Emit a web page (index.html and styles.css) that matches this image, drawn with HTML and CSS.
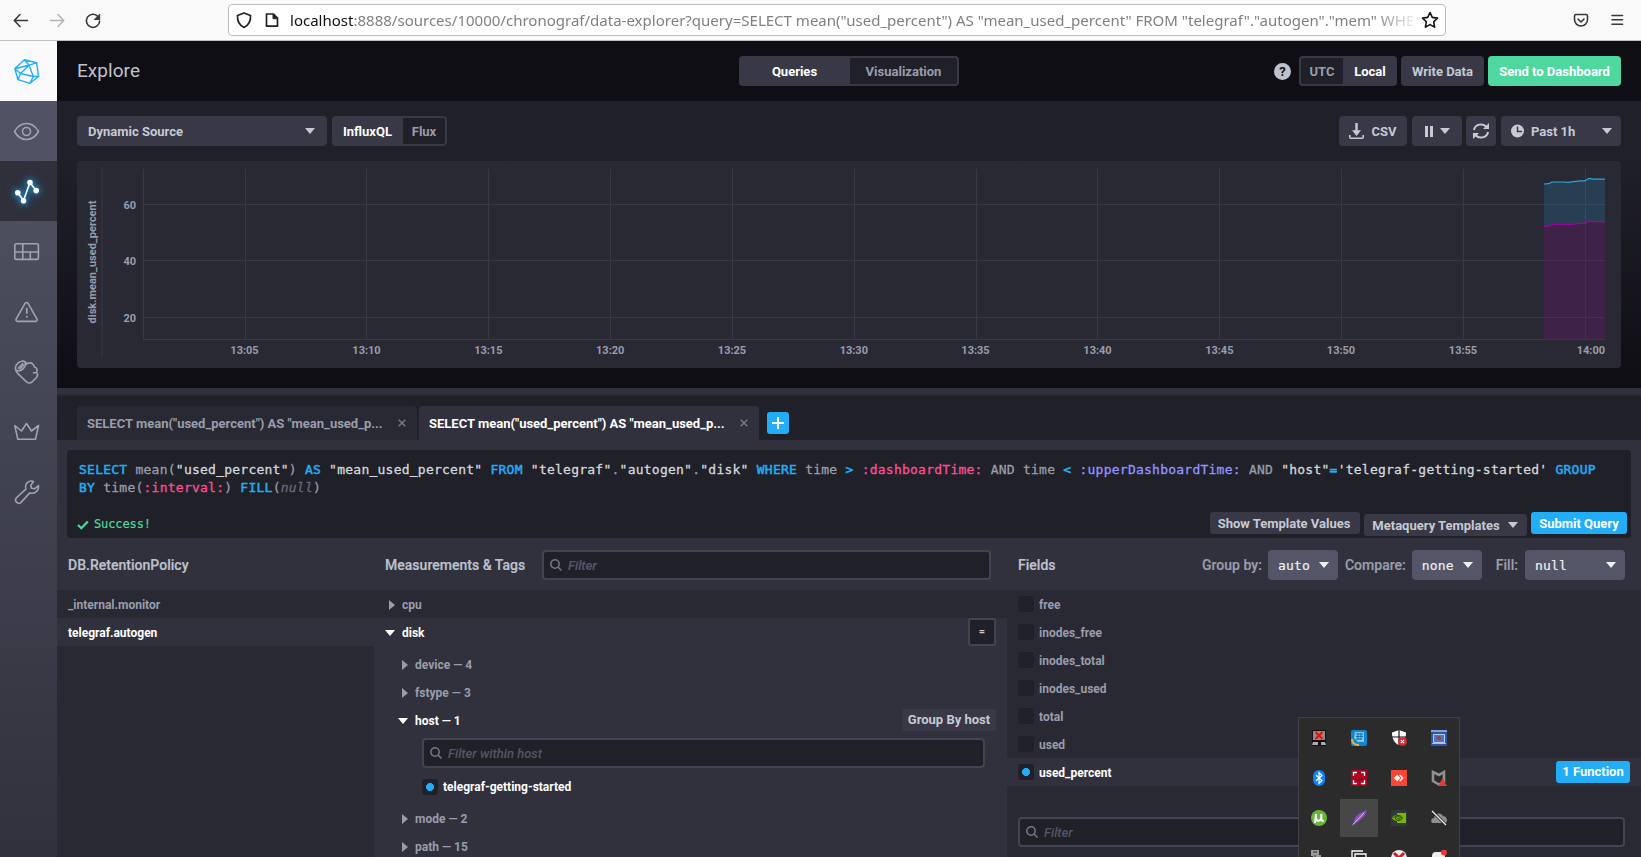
FILE: index.html
```html
<!DOCTYPE html>
<html lang="en">
<head>
<meta charset="utf-8">
<title>Explore</title>
<link rel="stylesheet" href="styles.css">
</head>
<body>
<div class="browser">
  <svg class="nav-icons" viewBox="0 0 228 40" fill="none" stroke="#38383d" stroke-width="1.6" stroke-linecap="round" stroke-linejoin="round">
    <path d="M27.5 20.5H14.5M20 14.5l-5.700 6 5.700 6"/>
    <path stroke="#b4b4b6" d="M50.500 20.500h13M58 14.500l5.700 6-5.700 6"/>
    <path d="M98 16.500A6.600 6.600 0 1 0 99.600 21"/>
    <path fill="#38383d" stroke-width="1" d="M99.700 14.500v5h-5z"/>
  </svg>
  <div class="url">
    <svg class="url-icons" viewBox="229 5 58 30" fill="none" stroke="#222" stroke-width="1.700" stroke-linejoin="round">
      <path d="M244 13l6.500 2.500c.3 5-1.500 9.500-6.500 12-5-2.500-6.800-7-6.500-12z"/>
      <path d="M266.500 14h7l4 4v8.200h-11z"/><path fill="#222" stroke-width="1" d="M273 14v4.700h4.700z"/>
    </svg>
    <div class="url-text"><b>localhost</b>:8888/sources/10000/chronograf/data-explorer?query=SELECT mean("used_percent") AS "mean_used_percent" FROM "telegraf"."autogen"."mem" WHE</div>
    <svg class="star" viewBox="0 0 20 20" fill="none" stroke="#111" stroke-width="1.600" stroke-linejoin="round"><path d="M10 2.500l2.300 4.900 5.200.7-3.800 3.700.9 5.300L10 14.600l-4.600 2.500.9-5.300-3.800-3.700 5.200-.7z"/></svg>
  </div>
  <svg class="menu-icons" viewBox="1560 0 81 40" fill="none" stroke="#38383d" stroke-width="1.600" stroke-linecap="round" stroke-linejoin="round">
    <path d="M1576 14.500h10a1.500 1.500 0 0 1 1.500 1.500v3.500a6.500 6.500 0 0 1-13 0V16a1.500 1.500 0 0 1 1.500-1.500zM1578 19l3 3 3-3"/>
    <path d="M1612 15.500h10.500M1612 19.800h10.500M1612 24.200h10.500"/>
  </svg>
</div>
<div class="app">
  <nav class="sidebar">
    <a class="item logo"><svg viewBox="0 41 57 60" stroke="#22adf6"><path d="M24.400 59.700l12.100 3 2.100 13.600-8.600 7L18 79.700l-3.200-11zM24.400 59.700l4.600 5.600 7.500-2.600M29 65.300l-8.500 8.200-5.700-4.800M20.500 73.500L18 79.700M29 65.300l4.300 11.200-12.800-3M33.300 76.500l5.300-.2M33.300 76.500L30 83.300M29 65.300L14.800 68.700"/></svg></a>
    <a class="item light"><svg viewBox="0 101 57 60"><path d="M14.500 131.500c3-5.300 7.200-8 12-8s9 2.700 12 8c-3 5.300-7.200 8-12 8s-9-2.700-12-8z"/><circle cx="26.500" cy="131.500" r="4"/></svg></a>
    <a class="item active"><svg viewBox="0 161 57 60"><g stroke="#fff" fill="#fff"><path fill="none" d="M18 193l5.500 7.500 6.500-18 6 8"/><circle cx="17.800" cy="192.700" r="2"/><circle cx="23.500" cy="200.700" r="2"/><circle cx="30" cy="182.500" r="2"/><circle cx="36.200" cy="190.600" r="2"/></g></svg></a>
    <a class="item"><svg viewBox="0 221 57 60"><rect x="14.800" y="243.800" width="23.600" height="15.600" rx="1.500"/><path d="M14.800 252h23.600M22.800 243.800v15.600M30.300 252v7.400"/></svg></a>
    <a class="item"><svg viewBox="0 281 57 60"><path d="M25.200 303.200a1.600 1.600 0 0 1 2.700 0l9.100 16a1.500 1.500 0 0 1-1.300 2.200H17.400a1.500 1.500 0 0 1-1.300-2.200z"/><path stroke-width="1.800" d="M26.800 308.500v4.500M26.800 316.500v.3"/></svg></a>
    <a class="item"><svg viewBox="0 341 57 60"><ellipse cx="20.500" cy="366" rx="6" ry="3.800" transform="rotate(-42 20.500 366)"/><path d="M15.900 370.300c0 1.500 1 2.200 2 3.300l8.600 8.200c2 1.500 4 1.500 5.700 0l3.600-3.600c2-2 2.500-4.200.7-5.700 1.300-2.500.5-5-2.200-5.500-.3-3-3-4.700-5.500-4l-3.800 1.500M25 361.800l2.300 2M18.300 368.200l4.300-4.500M20 369l3.500-3.800M36.500 372.500l-3 .3"/></svg></a>
    <a class="item"><svg viewBox="0 401 57 60"><path d="M17.800 439.300L14.800 425.500l6.700 5.500 5-7.500 5 7.500 7-5.500-3 13.800z"/></svg></a>
    <a class="item"><svg viewBox="0 461 57 60"><path d="M33.500 481.500c-3-1.200-6 .1-7.400 2.700-.8 1.700-.7 3.400-.2 5L16.200 498a3.300 3.300 0 0 0 4.600 4.600l9-9.700c4.500 1.500 9.200-1.700 8.700-7.400l-4 3.300-3-.6-.7-3z"/></svg></a>
  </nav>
  <main class="main">
    <header class="header">
      <h1 class="title">Explore</h1>
      <div class="radio page-tabs"><span class="on">Queries</span><span>Visualization</span></div>
      <div class="actions">
        <span class="help">?</span>
        <div class="radio tz"><span>UTC</span><span class="on">Local</span></div>
        <button class="btn write">Write Data</button>
        <button class="btn send">Send to Dashboard</button>
      </div>
    </header>
    <section class="viz">
      <div class="controls">
        <div class="btn source"><span>Dynamic Source</span><i class="caret"></i></div>
        <div class="radio lang"><span class="on">InfluxQL</span><span>Flux</span></div>
        <div class="btn csv"><svg width="15" height="18" viewBox="0 0 15 18" fill="none" stroke="#c6cad3" stroke-width="1.600"><path d="M.8 13v2.200q0 1 1 1h11.400q1 0 1-1V13"/><path stroke-width="2.400" d="M7.500 1v8"/><path fill="#c6cad3" stroke="none" d="M3 8.300h9L7.500 14z"/></svg><span>CSV</span></div>
        <div class="btn pause"><i class="bars"></i><i class="caret"></i></div>
        <div class="btn refresh"><svg width="18" height="18" viewBox="0 0 18 18" fill="none" stroke="#c6cad3" stroke-width="2"><path d="M2 8a7 6.500 0 0 1 12.500-3M16 10a7 6.500 0 0 1-12.500 3"/><path fill="#c6cad3" stroke="none" d="M17 1v6h-6zM1 17v-6h6z"/></svg></div>
        <div class="btn range"><svg width="13" height="14" viewBox="0 0 13 14"><circle cx="6.500" cy="7" r="6.500" fill="#c6cad3"/><path d="M6.500 2.500V7.500H11" fill="none" stroke="#383846" stroke-width="1.500"/></svg><span>Past 1h</span><i class="caret"></i></div>
      </div>
      <div class="graph">
        <svg viewBox="77 161 1544 207">
          <path d="M102 167v191" stroke="#31313d" stroke-width="2"/>
          <path class="grid" d="M245.500 169v170M366.500 169v170M488.500 169v170M610.500 169v170M732.500 169v170M854.500 169v170M976.500 169v170M1097.500 169v170M1219.500 169v170M1341.500 169v170M1463.500 169v170M1585.500 169v170M144 204.500h1461M144 260.500h1461M144 317.500h1461"/>
          <path class="grid" d="M143.500 169v170.500H1605"/>
          <path fill="#22adf6" fill-opacity=".17" d="M1544 184l5-.3 3-1.700h12l4 .3 12-1.500h5l4-2.800 4 1h12v43h-12l-4-1-4 2.800h-5l-12 1.500-4-.3h-12l-3 1.700-5 .3z"/>
          <path fill="#7a0f85" fill-opacity=".26" d="M1544 226.500l5-.3 3-1.700h12l4 .3 12-1.500h5l4-2.800 4 1h12V340h-61z"/>
          <path fill="none" stroke="#2aa5de" stroke-width="1.200" d="M1544 184l5-.3 3-1.700h12l4 .3 12-1.500h5l4-2.500 4 .8h12"/>
          <path fill="none" stroke="#a300a3" stroke-width="1.200" d="M1544 226.500l5-.3 3-1.700h12l4 .3 12-1.500h5l4-2.500 4 .8h12"/>
          <g class="axis" text-anchor="end"><text x="136" y="209">60</text><text x="136" y="265">40</text><text x="136" y="322">20</text><text x="1605" y="354">14:00</text></g>
          <g class="axis" text-anchor="middle"><text x="244.500" y="354">13:05</text><text x="366.500" y="354">13:10</text><text x="488.300" y="354">13:15</text><text x="610.200" y="354">13:20</text><text x="732" y="354">13:25</text><text x="853.800" y="354">13:30</text><text x="975.500" y="354">13:35</text><text x="1097.500" y="354">13:40</text><text x="1219.300" y="354">13:45</text><text x="1341" y="354">13:50</text><text x="1463" y="354">13:55</text>
          <text transform="translate(95.500 262) rotate(-90)" textLength="123">disk.mean_used_percent</text></g>
        </svg>
      </div>
    </section>
    <div class="divider"></div>
    <div class="qtabs">
      <div class="qtab"><span>SELECT mean("used_percent") AS "mean_used_p...</span><svg class="x" viewBox="0 0 8 8"><path d="M.7.700l6.600 6.600M7.300.700L.7 7.300"/></svg></div>
      <div class="qtab sel"><span>SELECT mean("used_percent") AS "mean_used_p...</span><svg class="x" viewBox="0 0 8 8"><path d="M.7.700l6.600 6.600M7.300.700L.7 7.300"/></svg></div>
      <div class="plus"></div>
    </div>
    <section class="builder">
      <div class="editor">
        <div class="code"><b>SELECT</b> mean(<s>"used_percent"</s>) <b>AS</b> <s>"mean_used_percent"</s> <b>FROM</b> <s>"telegraf"</s>.<s>"autogen"</s>.<s>"disk"</s> <b>WHERE</b> time <b>&gt;</b> <u>:dashboardTime:</u> AND time <b>&lt;</b> <em>:upperDashboardTime:</em> AND <s>"host"</s><b>=</b><s>'telegraf-getting-started'</s> <b>GROUP</b><br><b>BY</b> time(<u>:interval:</u>) <b>FILL</b>(<i>null</i>)</div>
        <div class="status">
          <svg width="12" height="10" viewBox="0 0 12 10" fill="none" stroke="#4ed8a0" stroke-width="2.200"><path d="M1 5l3.300 3.300L10.800 1.500"/></svg>
          <span class="ok">Success!</span>
          <button class="btn xs show">Show Template Values</button>
          <button class="btn xs meta">Metaquery Templates<i class="caret"></i></button>
          <button class="btn xs submit">Submit Query</button>
        </div>
      </div>
      <div class="cols">
        <div class="col db">
          <div class="head"><span>DB.RetentionPolicy</span></div>
          <div class="row">_internal.monitor</div>
          <div class="row hl">telegraf.autogen</div>
        </div>
        <div class="col meas">
          <div class="head"><span>Measurements &amp; Tags</span><div class="input"><svg class="mag" viewBox="0 0 12 12"><circle cx="5" cy="5" r="4.200"/><path d="M8 8l3.500 3.500"/></svg>Filter</div></div>
          <div class="row"><i class="tri"></i>cpu</div>
          <div class="row hl"><i class="tri down"></i>disk<span class="eq">=</span></div>
          <div class="tags">
            <div class="row"><i class="tri"></i>device — 4</div>
            <div class="row"><i class="tri"></i>fstype — 3</div>
            <div class="row hl"><i class="tri down"></i>host — 1<button class="btn xs group">Group By host</button></div>
            <div class="within">
              <div class="input"><svg class="mag" viewBox="0 0 12 12"><circle cx="5" cy="5" r="4.200"/><path d="M8 8l3.500 3.500"/></svg>Filter within host</div>
              <div class="val"><i class="check on"></i>telegraf-getting-started</div>
            </div>
            <div class="row"><i class="tri"></i>mode — 2</div>
            <div class="row"><i class="tri"></i>path — 15</div>
          </div>
        </div>
        <div class="col fields">
          <div class="head"><span>Fields</span>
            <label class="gb">Group by:</label><div class="btn mono w70">auto<i class="caret"></i></div>
            <label class="cmp">Compare:</label><div class="btn mono w70">none<i class="caret"></i></div>
            <label class="fl">Fill:</label><div class="btn mono w100">null<i class="caret"></i></div>
          </div>
          <div class="row"><i class="check"></i>free</div>
          <div class="row"><i class="check"></i>inodes_free</div>
          <div class="row"><i class="check"></i>inodes_total</div>
          <div class="row"><i class="check"></i>inodes_used</div>
          <div class="row"><i class="check"></i>total</div>
          <div class="row"><i class="check"></i>used</div>
          <div class="row hl"><i class="check on"></i>used_percent<button class="btn xs submit fn">1 Function</button></div>
          <div class="input bottom"><svg class="mag" viewBox="0 0 12 12"><circle cx="5" cy="5" r="4.200"/><path d="M8 8l3.500 3.500"/></svg>Filter</div>
        </div>
      </div>
    </section>
  </main>
</div>
<div class="tray">
  <span><svg viewBox="0 0 16 16"><path fill="#111" d="M1 0h14v16H1z"/><path fill="#8b8b8b" d="M2 1h12v9H2z"/><path d="M4.500 2l7 7M11.500 2l-7 7" stroke="#f00" stroke-width="1.800"/><path fill="#aaa" d="M2 12h5v3H1zM10 12h4l1 3h-5z"/></svg></span>
  <span><svg viewBox="0 0 16 16"><rect width="16" height="16" rx="2" fill="#1285cf"/><path d="M4 2h9v10H7l-4-4z" fill="#7fc7ee"/><path d="M5 4h7M5 6.500h7M5 9h6M7 3v7M10 3v7" stroke="#1673b5"/><path d="M1 9c0 4 3 6 7 6" stroke="#e6b34a" stroke-width="2" fill="none"/></svg></span>
  <span><svg viewBox="0 0 16 16"><path d="M8 0l7 2.500c0 6-2 10-7 13-5-3-7-7-7-13z" fill="#fff"/><path d="M8 0v16M1 7h14" stroke="#111" stroke-width="1.200"/><circle cx="11.500" cy="11.500" r="4.500" fill="#da2730"/><path d="M9.800 9.800l3.400 3.400M13.200 9.800l-3.400 3.400" stroke="#fff" stroke-width="1.200"/></svg></span>
  <span><svg viewBox="0 0 16 16"><path fill="#2e56a8" d="M0 0h16v16H0z"/><path fill="#7fa3dd" d="M0 0h16v2H0z"/><path d="M2.500 4.500h11v8h-11z" fill="#5475b5" stroke="#b7cbea"/><path d="M8 6v4M6 8h4" stroke="#a43a55" stroke-width="2"/><path fill="#aebfda" d="M1 13h14v1H1z"/></svg></span>
  <span><svg viewBox="0 0 16 16"><rect x="2" width="12" height="16" rx="6" fill="#0a84ff"/><path d="M5 5.200l6 5.300-3 2.800V2.700l3 2.800-6 5.300" fill="none" stroke="#fff" stroke-width="1.200"/></svg></span>
  <span><svg viewBox="0 0 16 16"><path fill="#a90420" d="M0 0h16v16H0z"/><path d="M2.500 6V2.500H6M10 2.500h3.500V6M13.500 10v3.500H10M6 13.500H2.500V10" fill="none" stroke="#fff" stroke-width="1.300"/></svg></span>
  <span><svg viewBox="0 0 16 16"><path fill="#fa4636" d="M0 0h16v16H0z"/><path fill="#fff" d="M3 8l3.200-3.200L9.400 8l-3.200 3.200zM8.300 5.500l.9-.9L12.600 8l-3.400 3.400-.9-.9L10.800 8z"/></svg></span>
  <span><svg viewBox="0 0 16 16"><path fill="none" stroke="#909090" stroke-width="2.600" d="M2 2v9l6 3.500 5-3V2L8 5z"/><path fill="#e23b37" d="M11.500 8l4.500 8H7.500z"/></svg></span>
  <span><svg viewBox="0 0 16 16"><circle cx="8" cy="8" r="8" fill="#69b53e"/><path d="M5 4L4 13M5 4v4c0 3.500 4.500 3.500 5.300 0V4v5c0 2 1 2 2.500 1.500" fill="none" stroke="#fff" stroke-width="2"/></svg></span>
  <span class="hot"><svg viewBox="0 0 16 16"><path fill="#8e50c5" d="M15.500 0c0 5-4 9-10 12.500L2 15.500H1L3 12C3 7 8 3 15.500 0z"/><path d="M2 14.500L13 3" stroke="#dfbcf1"/></svg></span>
  <span><svg viewBox="0 0 16 16"><path fill="#33383b" d="M0 0h16v16H0z"/><path fill="#76b900" d="M6 3h9v10H6v-2c-2 0-4-1-5-3 1-2 3-3.300 5-3.300z"/><path d="M2.500 8c3-4 7-3 9 0-2 3-6 4-7 0 2-3 4-1.500 5 0-1 1.500-3 1.500-3 0" stroke="#273013" fill="none"/></svg></span>
  <span><svg viewBox="0 0 16 16"><path fill="#8d8d8d" d="M1 13c-2-3 0-5 2-5 1-5 7-6 9-2 4 0 5 5 3 7z"/><path d="M1 1l14 14" stroke="#2b2b2b" stroke-width="3"/><path d="M1 1l14 14" stroke="#eee" stroke-width="1.200"/></svg></span>
  <span><svg viewBox="0 0 16 16"><path fill="#999" d="M0 0h8v5h2v10H2V6H0z"/><path d="M2 2h4M4 5v7" stroke="#333"/></svg></span>
  <span><svg viewBox="0 0 16 16"><path fill="none" stroke="#fff" stroke-width="1.300" d="M1 12V1h11M4 4h11v11H4z"/></svg></span>
  <span><svg viewBox="0 0 16 16"><circle cx="8" cy="8" r="8" fill="#eee"/><path d="M3 3l10 10M13 3L3 13" stroke="#d3212c" stroke-width="3"/></svg></span>
  <span><svg viewBox="0 0 16 16"><rect x="1" y="2" width="13" height="12" rx="4" fill="#eee"/><circle cx="13" cy="2.500" r="3" fill="#ed3b3b"/></svg></span>
</div>
</body>
</html>
```
FILE: styles.css
```css
* { box-sizing: border-box; }
body { margin: 0; width: 1641px; height: 857px; overflow: hidden; position: relative; font: 700 13px Roboto, sans-serif; color: #999dab; background: #0f0e15; }
button { font: inherit; border: 0; padding: 0; }
.browser { height: 41px; display: flex; align-items: flex-start; background: #f9f9fa; border-bottom: 1px solid #c0c0c2; }
.nav-icons { width: 228px; height: 40px; }
.url { width: 1218px; height: 32px; margin-top: 4px; border: 1px solid #bcbcbe; border-radius: 4px; background: #fff; display: flex; align-items: center; }
.url-icons { width: 58px; height: 30px; flex: none; margin-right: 3px; }
.url-text { width: 1125px; flex: none; overflow: hidden; white-space: nowrap; font: 400 15px "Noto Sans", sans-serif; letter-spacing: .01px; color: #808080; -webkit-mask-image: linear-gradient(90deg, #000 1085px, transparent 1130px); mask-image: linear-gradient(90deg, #000 1085px, transparent 1130px); }
.url-text b { font-weight: 400; color: #111; }
.star { width: 20px; height: 20px; margin-left: 5px; }
.menu-icons { width: 81px; height: 40px; margin-left: auto; }

.app { display: flex; height: 816px; }
.sidebar { width: 57px; background: linear-gradient(180deg, #545667, #31313d); }
.item { display: block; height: 60px; }
.item svg { display: block; width: 57px; height: 60px; fill: none; stroke: #a0a3b1; stroke-width: 1.600px; stroke-linejoin: round; stroke-linecap: round; }
.item.logo { background: #fafafd; }
.logo svg { stroke: #22adf6; stroke-width: 1.400px; }
.item.light { background: #515264; }
.item.active { background: #30303b; overflow: hidden; }
.active svg { filter: drop-shadow(0 0 3px #22adf6) drop-shadow(0 0 5px #1b608a); }

.main { width: 1584px; display: flex; flex-direction: column; }
.header { height: 60px; background: #0f0e15; padding: 0 20px; display: flex; align-items: center; }
.title { margin: 0; padding-bottom: 2px; width: 662px; font-size: 19px; font-weight: 400; letter-spacing: .05px; color: #bec2cc; }
.radio { height: 30px; border: 2px solid #383846; border-radius: 4px; background: #202028; display: flex; }
.radio span { flex: 1; display: flex; align-items: center; justify-content: center; }
.radio .on { background: #383846; color: #fff; }
.page-tabs { width: 220px; }
.page-tabs .on { flex: 0 0 109px; padding-right: 2px; }
.actions { margin-left: auto; display: flex; align-items: center; }
.help { width: 17px; height: 17px; border-radius: 50%; background: #bec2cc; color: #0f0e15; text-align: center; line-height: 17px; margin-right: 8px; }
.tz { width: 98px; margin-right: 4px; }
.tz span:first-child { flex: 0 0 42px; }
.tz .on { padding-left: 2px; }
.btn { height: 30px; border-radius: 4px; background: #383846; color: #c6cad3; display: flex; align-items: center; justify-content: center; white-space: nowrap; }
.write { width: 83px; margin-right: 4px; }
.send { width: 133px; background: #4ed8a0; color: #fff; }
.caret { width: 0; height: 0; border: 5px solid transparent; border-top: 6px solid currentColor; border-bottom: 0; }

.viz { height: 287px; padding: 15px 20px 20px; background: linear-gradient(180deg, #202028 0, #202028 20%, #0f0e15 97%); }
.controls { display: flex; height: 30px; margin-bottom: 15px; }
.source { width: 250px; justify-content: space-between; padding: 0 12px 0 11px; margin-right: 5px; }
.lang { width: 115px; margin-right: auto; }
.lang .on { flex: 0 0 69px; padding-right: 2px; }
.csv { width: 68px; gap: 7px; margin-right: 5px; }
.pause { width: 50px; gap: 7px; margin-right: 4px; }
.bars { width: 8px; height: 11px; border: solid #c6cad3; border-width: 0 3px; }
.refresh { width: 30px; margin-right: 5px; }
.range { width: 120px; padding: 0 9px 0 10px; gap: 7px; }
.range .caret { margin-left: auto; }
.graph { height: 207px; background: #292933; border-radius: 4px; }
.graph svg { display: block; width: 1544px; height: 207px; }
.grid { fill: none; stroke: #383846; }
.axis { font: 700 11px Roboto, sans-serif; fill: #999dab; }

.divider { height: 8px; background: #31313d; border-bottom: 2px solid #292933; }
.qtabs { height: 44px; background: #202028; padding: 10px 20px 0; display: flex; gap: 2px; }
.qtab { width: 340px; height: 34px; background: #292933; border-radius: 4px 4px 0 0; padding: 0 11px 0 10px; display: flex; align-items: center; justify-content: space-between; white-space: nowrap; }
.qtab.sel { background: #31313d; color: #fff; }
.x { width: 8px; height: 8px; stroke: #757888; stroke-width: 1.500px; }
.plus { width: 22px; height: 22px; margin: 6px 0 0 6px; border-radius: 3px; background: linear-gradient(#fff, #fff) center / 12px 2px no-repeat, linear-gradient(#fff, #fff) center / 2px 12px no-repeat, #22adf6; }
.builder { height: 417px; background: #31313d; padding-top: 10px; }
.editor { height: 88px; margin: 0 10px; background: #202028; border-radius: 3px; padding: 11px 4px 0 12px; }
.code { height: 51px; font: 400 13px/18px "DejaVu Sans Mono", monospace; letter-spacing: .24px; white-space: nowrap; color: #999dab; -webkit-text-stroke: .3px currentColor; }
.code b { color: #22adf6; font-weight: 400; -webkit-text-stroke-width: .5px; }
.code s { color: #d4d7dd; text-decoration: none; }
.code u { color: #ff4d96; text-decoration: none; }
.code em { color: #9394ff; font-style: normal; }
.code i { color: #676978; }
.status { display: flex; height: 24px; align-items: flex-start; }
.status svg { margin: 8px 5px 0 -2px; }
.ok { font: 400 12px/24px "DejaVu Sans Mono", monospace; letter-spacing: -.1px; color: #4ed8a0; margin-right: auto; -webkit-text-stroke: .2px currentColor; }
.xs { height: 22px; border-radius: 3px; }
.show { width: 150px; margin-right: 4px; padding-right: 2px; }
.meta { width: 163px; margin: 2px 4px 0 0; gap: 8px; padding-right: 1px; }
.submit { width: 96px; background: #22adf6; color: #fff; }

.cols { display: flex; height: 319px; }
.col { background: #292933; overflow: hidden; }
.db { width: 317px; }
.meas { width: 633px; }
.fields { width: 634px; }
.head { height: 52px; background: #31313d; display: flex; align-items: center; padding: 2px 11px 0; font-size: 14px; font-weight: 500; letter-spacing: .02px; color: #bec2cc; -webkit-text-stroke: .2px currentColor; }
.head span { margin-right: auto; }
.row { height: 28px; padding: 0 11px; display: flex; align-items: center; font-size: 12px; line-height: 14px; font-weight: 700; }
.row:not(:has(.eq, .btn)) { padding-top: 1px; }
.row.hl { background: #31313d; color: #fff; }
.row:has(.eq, .btn) { padding-top: 1px; }
.row .eq, .row .btn { margin-top: -1px; }
.row .check { margin-top: -1px; }
.input { height: 30px; border: 2px solid #434453; border-radius: 4px; background: #202028; color: #545667; font-size: 13px; font-style: italic; font-weight: 500; letter-spacing: 0; display: flex; align-items: center; padding-left: 6px; }
.mag { width: 12px; height: 12px; margin-right: 6px; fill: none; stroke: #757888; stroke-width: 1.500px; }
.meas .head { padding-right: 16px; }
.head .input { width: 449px; }
.tri { width: 0; height: 0; border: 5px solid transparent; border-left: 6px solid currentColor; border-right: 0; margin: 0 7px 0 4px; }
.tri.down { border: 5px solid transparent; border-top: 6px solid currentColor; border-bottom: 0; margin: 0 7px 0 0; }
.eq { width: 28px; height: 28px; margin-left: auto; background: #202028; border: 2px solid #434453; border-radius: 3px; color: #c6cad3; font-size: 11px; display: flex; align-items: center; justify-content: center; }
.tags { background: #31313d; padding: 4px 0 0 13px; height: 211px; }
.group { width: 94px; margin-left: auto; font-size: 13px; }
.within { padding: 4px 22px 4px 35px; }
.val { height: 28px; margin-top: 4px; padding-top: 1px; line-height: 14px; display: flex; align-items: center; color: #fff; font-size: 12px; }
.check { width: 16px; height: 16px; border-radius: 3px; background: #202028; margin-right: 5px; }
.check.on { background: radial-gradient(circle, #22adf6 3.700px, #202028 4.300px); }
.fields .head { padding: 2px 16px 0 11px; }
.head label { color: #999dab; }
.gb { margin-right: 6px; }
.cmp { margin: 0 6px 0 7px; }
.fl { margin: 0 7px 0 14px; }
.mono { background: #545667; color: #eeeff2; font: 400 13px "DejaVu Sans Mono", monospace; letter-spacing: .2px; justify-content: space-between; padding: 0 9px 0 10px; }
.w70 { width: 70px; }
.w100 { width: 100px; }
.fn { width: 74px; margin-left: auto; font-size: 13px; }
.bottom { margin: 31px 16px 0 11px; }

.tray { position: absolute; left: 1298px; top: 717px; width: 162px; height: 160px; background: #2b2b2b; border: 1px solid #424245; display: grid; grid-template-columns: repeat(4, 40px); grid-auto-rows: 40px; }
.tray span { display: flex; align-items: center; justify-content: center; }
.tray svg { width: 16px; height: 16px; }
.tray .hot { background: #474747; margin: 1px; }
```
